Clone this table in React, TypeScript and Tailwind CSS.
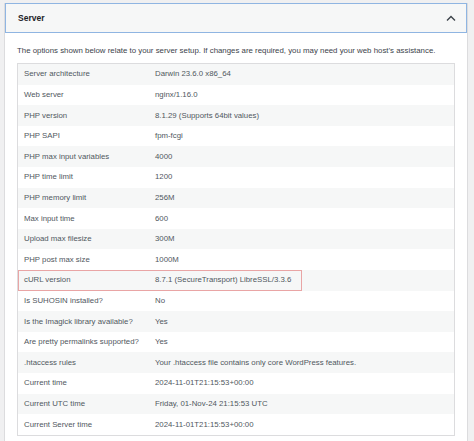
import React from 'react'

const rows: [string, string][] = [
  ['Server architecture', 'Darwin 23.6.0 x86_64'],
  ['Web server', 'nginx/1.16.0'],
  ['PHP version', '8.1.29 (Supports 64bit values)'],
  ['PHP SAPI', 'fpm-fcgi'],
  ['PHP max input variables', '4000'],
  ['PHP time limit', '1200'],
  ['PHP memory limit', '256M'],
  ['Max input time', '600'],
  ['Upload max filesize', '300M'],
  ['PHP post max size', '1000M'],
  ['cURL version', '8.7.1 (SecureTransport) LibreSSL/3.3.6'],
  ['Is SUHOSIN installed?', 'No'],
  ['Is the Imagick library available?', 'Yes'],
  ['Are pretty permalinks supported?', 'Yes'],
  ['.htaccess rules', 'Your .htaccess file contains only core WordPress features.'],
  ['Current time', '2024-11-01T21:15:53+00:00'],
  ['Current UTC time', 'Friday, 01-Nov-24 21:15:53 UTC'],
  ['Current Server time', '2024-11-01T21:15:53+00:00'],
]

export default function App() {
  return (
    <div className="h-[441px] overflow-hidden bg-[#f0f0f1] pl-1 pr-[6px] pt-[3px] font-['Liberation_Sans',Arial,sans-serif]">
      <div className="h-full border-x border-[#dcdcde] bg-white">
        {/* Header */}
        <div className="flex h-[30px] items-center justify-between border border-[#8fb5e2] bg-[#f6f7f7] pl-3 pr-[10px]">
          <span className="text-[8.5px] font-bold text-[#1d2327]">Server</span>
          <svg width="10" height="7" viewBox="0 0 10 7" fill="none">
            <path d="M1 5.5 L5 1.5 L9 5.5" stroke="#3c434a" strokeWidth="1.4" />
          </svg>
        </div>

        {/* Body */}
        <div className="pl-3 pr-3 pt-[12px]">
          <p className="text-[7.85px] leading-[11px] text-[#3c434a]">
            The options shown below relate to your server setup. If changes are required, you may need your web host’s assistance.
          </p>
          <div className="relative mt-[7px] border border-[#dcdcde]">
            {rows.map(([label, value], i) => (
              <div
                key={label}
                className={`flex h-[20.6px] items-center text-[7.8px] text-[#50575e] ${i % 2 === 0 ? 'bg-[#f6f7f7]' : 'bg-white'}`}
              >
                <div className="w-[137px] shrink-0 pl-[6px]">{label}</div>
                <div>{value}</div>
              </div>
            ))}
            {/* highlight */}
            <div className="absolute left-0 top-[206px] h-[21px] w-[284px] border border-[#e9a5a5]" />
          </div>
        </div>
      </div>
    </div>
  )
}
